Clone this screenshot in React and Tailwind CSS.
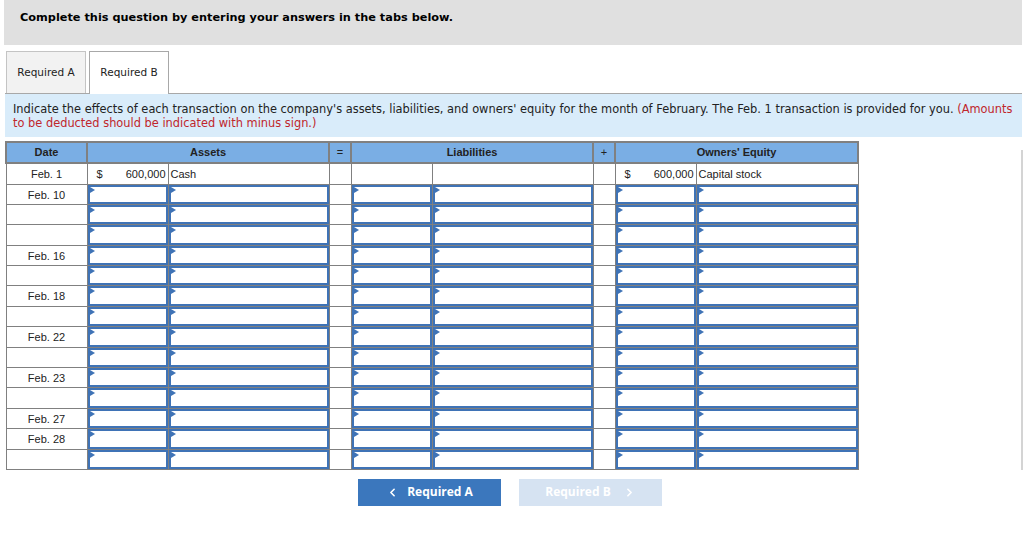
import React from 'react';
import { ChevronLeft, ChevronRight } from 'lucide-react';

const rows = [
    'Feb. 10', '', '', 'Feb. 16', '', 'Feb. 18', '', 'Feb. 22', '', 'Feb. 23', '', 'Feb. 27', 'Feb. 28', ''
];

function InputCell() {
    return (
        <td className="p-0 border border-[#808080]">
            <div className="relative h-[19.4px] border-2 border-[#3f73b6] bg-white">
                <span className="absolute left-0 top-0 w-0 h-0 border-t-[3px] border-b-[3px] border-l-[5px] border-t-transparent border-b-transparent border-l-[#3f73b6]"></span>
            </div>
        </td>
    );
}

export default function App() {
    return (
        <div className="w-[1024px] h-[534px] bg-white relative" style={{ fontFamily: '"DejaVu Sans", Verdana, sans-serif' }}>
            {/* Top banner */}
            <div className="ml-[4px] mr-[2px] h-[45px] bg-[#e0e0e0] pl-[16px] pt-[11px] text-[11.3px] leading-[14px] font-bold text-black">
                Complete this question by entering your answers in the tabs below.
            </div>

            {/* Tabs */}
            <div className="mt-[6px] ml-[6px] flex gap-[3px] h-[42px] items-stretch">
                <div className="w-[80px] bg-[#f2f2f2] border border-[#c4c4c4] border-b-0 flex items-center justify-center text-[10.5px] text-[#222]">Required A</div>
                <div className="w-[80px] bg-white border border-[#a8a8a8] border-b-0 flex items-center justify-center text-[10.5px] text-[#222] relative z-10 -mb-px">Required B</div>
            </div>

            {/* Instructions */}
            <div className="ml-[5px] mr-[2px] border-t border-[#a8a8a8] bg-[#d9ecfa] pl-[8px] pr-[3px] pt-[8px] pb-[7px] text-[11.4px] leading-[14px] text-[#222]">
                Indicate the effects of each transaction on the company's assets, liabilities, and owners' equity for the month of February. The Feb. 1 transaction is provided for you. <span className="text-[#c0262c]">(Amounts to be deducted should be indicated with minus sign.)</span>
            </div>

            {/* Table */}
            <div className="mt-[4px] ml-[5px]" style={{ fontFamily: '"Liberation Sans", Arial, sans-serif' }}>
                <table className="border-collapse text-[11px] text-[#222] table-fixed w-[852px]">
                    <colgroup>
                        <col className="w-[81px]" />
                        <col className="w-[81px]" />
                        <col className="w-[161px]" />
                        <col className="w-[22px]" />
                        <col className="w-[81px]" />
                        <col className="w-[161px]" />
                        <col className="w-[22px]" />
                        <col className="w-[81px]" />
                        <col className="w-[162px]" />
                    </colgroup>
                    <thead>
                        <tr className="h-[21px] bg-[#7aaee4]">
                            <th className="border-2 border-[#808080] font-bold text-[#222]">Date</th>
                            <th colSpan={2} className="border-2 border-[#808080] font-bold text-[#222]">Assets</th>
                            <th className="border-2 border-[#808080] font-normal text-[#222]">=</th>
                            <th colSpan={2} className="border-2 border-[#808080] font-bold text-[#222]">Liabilities</th>
                            <th className="border-2 border-[#808080] font-normal text-[#222]">+</th>
                            <th colSpan={2} className="border-2 border-[#808080] font-bold text-[#222]">Owners' Equity</th>
                        </tr>
                    </thead>
                    <tbody>
                        <tr className="h-[21px]">
                            <td className="border border-[#808080] text-center">Feb. 1</td>
                            <td className="border border-[#808080] px-[2px]">
                                <div className="flex justify-between pl-[7px]"><span>$</span><span>600,000</span></div>
                            </td>
                            <td className="border border-[#808080] px-[2px]">Cash</td>
                            <td className="border border-[#808080]"></td>
                            <td className="border border-[#808080]"></td>
                            <td className="border border-[#808080]"></td>
                            <td className="border border-[#808080]"></td>
                            <td className="border border-[#808080] px-[2px]">
                                <div className="flex justify-between pl-[7px]"><span>$</span><span>600,000</span></div>
                            </td>
                            <td className="border border-[#808080] px-[2px]">Capital stock</td>
                        </tr>
                        {rows.map((d, i) => (
                            <tr key={i}>
                                <td className="border border-[#808080] text-center align-top pt-[2px] p-0">{d}</td>
                                <InputCell />
                                <InputCell />
                                <td className="border border-[#808080]"></td>
                                <InputCell />
                                <InputCell />
                                <td className="border border-[#808080]"></td>
                                <InputCell />
                                <InputCell />
                            </tr>
                        ))}
                    </tbody>
                </table>
            </div>

            {/* Nav buttons */}
            <div className="mt-[9px] flex justify-center gap-[18px] pr-[4px]" style={{ fontFamily: '"Open Sans", Arial, sans-serif' }}>
                <button className="w-[143px] h-[27px] bg-[#3b77bd] text-white text-[12px] font-bold flex items-center justify-center gap-[8px]">
                    <ChevronLeft size={13} strokeWidth={3} /> Required A
                </button>
                <button className="w-[143px] h-[27px] bg-[#d6e3f2] text-white text-[12px] font-bold flex items-center justify-center gap-[12px]">
                    Required B <ChevronRight size={13} strokeWidth={3} />
                </button>
            </div>

            {/* right edge line */}
            <div className="absolute right-[1px] top-[150px] h-[320px] w-[2px] bg-[#d4d4d4]"></div>
        </div>
    );
}
